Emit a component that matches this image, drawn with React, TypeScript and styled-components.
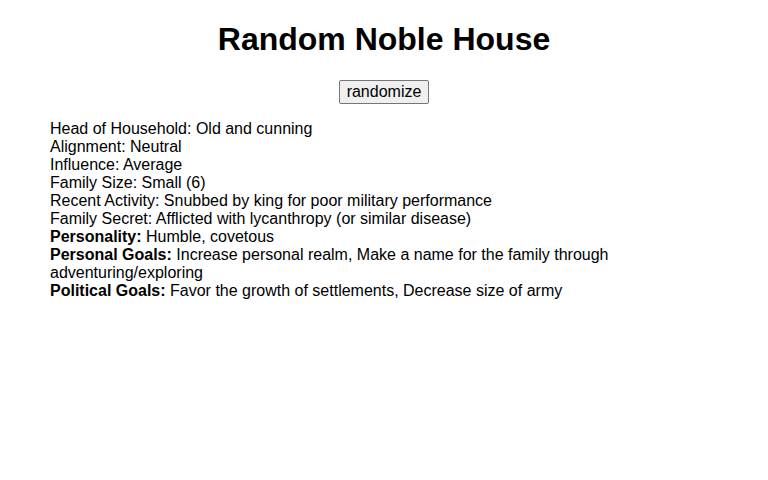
import React from "react";
import styled, { createGlobalStyle } from "styled-components";

const GlobalStyle = createGlobalStyle`
  html, body {
    margin: 0;
    padding: 0;
    background: #ffffff;
  }
  body {
    font-family: "Liberation Sans", Arial, sans-serif;
    font-size: 16px;
    color: #000000;
  }
`;

const Page = styled.main`
  display: flex;
  flex-direction: column;
  align-items: center;
`;

const Title = styled.h1`
  margin: 21.44px 0;
  font-size: 32px;
  font-weight: bold;
  text-align: center;
`;

const RandomizeButton = styled.button`
  font-family: "Liberation Sans", Arial, sans-serif;
  font-size: 16px;
  line-height: normal;
  color: #000000;
  background: #efefef;
  border: 1px solid #767676;
  border-radius: 2px;
  padding: 2px 7px;
  cursor: pointer;
`;

const Details = styled.section`
  align-self: stretch;
  margin: 16px 0;
  padding: 0 50px;
`;

const Line = styled.div`
  line-height: normal;
`;

const Label = styled.strong`
  font-weight: bold;
`;

const plain: [string, string][] = [
  ["Head of Household", "Old and cunning"],
  ["Alignment", "Neutral"],
  ["Influence", "Average"],
  ["Family Size", "Small (6)"],
  ["Recent Activity", "Snubbed by king for poor military performance"],
  ["Family Secret", "Afflicted with lycanthropy (or similar disease)"],
];

const strong: [string, string][] = [
  ["Personality", "Humble, covetous"],
  ["Personal Goals", "Increase personal realm, Make a name for the family through adventuring/exploring"],
  ["Political Goals", "Favor the growth of settlements, Decrease size of army"],
];

export default function App() {
  return (
    <>
      <GlobalStyle />
      <Page>
        <Title>Random Noble House</Title>
        <RandomizeButton type="button">randomize</RandomizeButton>
        <Details>
          {plain.map(([k, v]) => (
            <Line key={k}>
              {k}: {v}
            </Line>
          ))}
          {strong.map(([k, v]) => (
            <Line key={k}>
              <Label>{k}:</Label> {v}
            </Line>
          ))}
        </Details>
      </Page>
    </>
  );
}
